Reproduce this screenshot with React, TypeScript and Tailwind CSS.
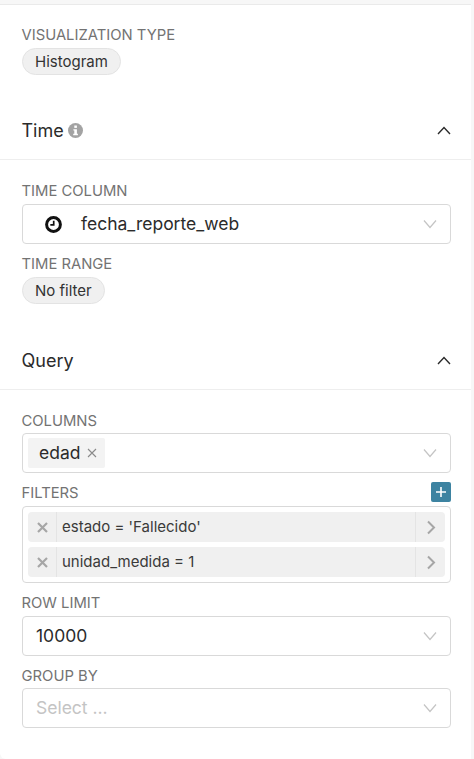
import React from "react";

const Chevron = () => (
  <svg width="16" height="10" viewBox="0 0 16 10" fill="none" className="shrink-0">
    <path d="M2 1.5 L8 8.5 L14 1.5" stroke="#c4c4c4" strokeWidth="1.2" />
  </svg>
);

const Up = () => (
  <svg width="14" height="9" viewBox="0 0 14 9" fill="none">
    <path d="M1 8 L7 1.5 L13 8" stroke="#2a2a2a" strokeWidth="1.4" />
  </svg>
);

const Label = ({ children, className = "" }: { children: React.ReactNode; className?: string }) => (
  <div className={`-ml-[0.5px] text-[14.8px] leading-[20px] text-[#737373] ${className}`}>{children}</div>
);

const Pill = ({ children }: { children: React.ReactNode }) => (
  <div className="inline-flex h-[27px] items-center rounded-full border border-[#e3e3e3] bg-[#f0f0f0] px-[12px] pt-[1px] text-[15px] text-[#333]">
    {children}
  </div>
);

const Select = ({ children }: { children: React.ReactNode }) => (
  <div className="flex h-[40px] items-center justify-between rounded-[4px] border border-[#d9d9d9] bg-white pr-[12px]">
    {children}
    <Chevron />
  </div>
);

const Section = ({ title, info }: { title: string; info?: boolean }) => (
  <div className="flex h-[58px] items-center justify-between border-b border-[#eeeeee] pl-[21.5px] pr-[20px]">
    <div className="flex items-center gap-[4px] text-[18px] text-[#2b2b2b]">
      {title}
      {info && (
        <svg width="15" height="15" viewBox="0 0 15 15">
          <circle cx="7.5" cy="7.5" r="7.5" fill="#a3a3a3" />
          <rect x="6.3" y="2.5" width="2.6" height="2.4" fill="#fff" />
          <path d="M5.4 6.2h3.5v4.6h1v1.4H5.2v-1.4h1.1V7.6H5.4z" fill="#fff" />
        </svg>
      )}
    </div>
    <Up />
  </div>
);

const Filter = ({ text }: { text: string }) => (
  <div className="flex h-[30px] items-center rounded-[4px] bg-[#f0f0f0] text-[15px] text-[#3a3a3a]">
    <div className="flex h-full w-[29px] items-center justify-center border-r border-[#e4e4e4]">
      <svg width="11" height="11" viewBox="0 0 11 11" fill="none">
        <path d="M1 1 L10 10 M10 1 L1 10" stroke="#a6a6a6" strokeWidth="2.2" />
      </svg>
    </div>
    <div className="flex-1 pl-[5px]">{text}</div>
    <div className="flex h-full w-[30px] items-center justify-center border-l border-[#e4e4e4]">
      <svg width="10" height="15" viewBox="0 0 10 15" fill="none">
        <path d="M2 1.5 L8 7.5 L2 13.5" stroke="#a6a6a6" strokeWidth="2" />
      </svg>
    </div>
  </div>
);

export default function App() {
  return (
    <div className="h-[759px] w-[474px] overflow-hidden bg-[#f7f7f7] font-['Inter',sans-serif]">
      <div className="h-[4px]" />
      <div className="h-[755px] w-[471px] rounded-bl-[6px] border-t border-[#eaeaea] bg-white">
        <div className="pl-[22px] pr-[20px] pt-[20px]">
          <Label>VISUALIZATION TYPE</Label>
          <div className="mt-[3px] flex">
            <Pill>Histogram</Pill>
          </div>
        </div>
        <div className="mt-[27px]">
          <Section title="Time" info />
        </div>
        <div className="pl-[22px] pr-[20px] pt-[21px]">
          <Label>TIME COLUMN</Label>
          <div className="mt-[3px]">
            <Select>
              <div className="flex items-center">
                <svg width="17" height="17" viewBox="0 0 16 16" className="ml-[22px]" fill="none">
                  <circle cx="8" cy="8" r="6.5" stroke="#111" strokeWidth="2.8" />
                  <path d="M8.2 4.4V8.4H5" stroke="#111" strokeWidth="1.6" />
                </svg>
                <span className="ml-[19px] text-[17.5px] text-[#2b2b2b]">fecha_reporte_web</span>
              </div>
            </Select>
          </div>
          <Label className="mt-[10px]">TIME RANGE</Label>
          <div className="mt-[3px] flex">
            <Pill>No filter</Pill>
          </div>
        </div>
        <div className="mt-[28px]">
          <Section title="Query" />
        </div>
        <div className="pl-[22px] pr-[20px] pt-[21px]">
          <Label>COLUMNS</Label>
          <div className="mt-[2px]">
            <Select>
              <div className="ml-[5px] flex h-[30px] items-center gap-[7px] rounded-[2px] bg-[#f3f3f3] pl-[11px] pr-[8px] text-[17.5px] text-[#2b2b2b]">
                edad
                <svg width="10" height="10" viewBox="0 0 10 10" fill="none">
                  <path d="M1 1 L9 9 M9 1 L1 9" stroke="#8a8a8a" strokeWidth="1.1" />
                </svg>
              </div>
            </Select>
          </div>
          <div className="mt-[9px] flex h-[20px] items-center justify-between">
            <Label className="translate-y-[1px]">FILTERS</Label>
            <div className="flex h-[20px] w-[20px] items-center justify-center rounded-[2px] bg-[#3d83a1]">
              <svg width="12" height="12" viewBox="0 0 12 12" fill="none">
                <path d="M6 1 V11 M1 6 H11" stroke="#fff" strokeWidth="1.6" />
              </svg>
            </div>
          </div>
          <div className="mt-[4px] flex flex-col gap-[5px] rounded-[4px] border border-[#d9d9d9] p-[5px]">
            <Filter text="estado = 'Fallecido'" />
            <Filter text="unidad_medida = 1" />
          </div>
          <Label className="mt-[10px]">ROW LIMIT</Label>
          <div className="mt-[3px]">
            <Select>
              <span className="ml-[13px] text-[17.5px] text-[#2b2b2b]">10000</span>
            </Select>
          </div>
          <Label className="mt-[10px]">GROUP BY</Label>
          <div className="mt-[2px]">
            <Select>
              <span className="ml-[13px] text-[17.5px] text-[#c4c4c4]">Select ...</span>
            </Select>
          </div>
        </div>
      </div>
    </div>
  );
}
